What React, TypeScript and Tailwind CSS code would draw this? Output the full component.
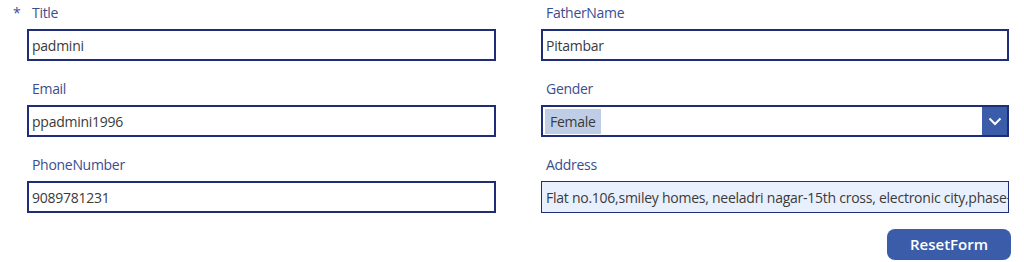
import React from "react";

const font = { fontFamily: '"Open Sans", "Noto Sans", sans-serif' };

function Label({ text, star }: { text: string; star?: boolean }) {
  return (
    <div className="relative h-[26px] leading-[26px] pl-[5px] mb-[3px] text-[14px] tracking-[-0.3px] text-[#3b4d8f]">
      {star && (
        <span className="absolute left-[-14px] top-0 text-[14px] text-[#3b4d8f]">*</span>
      )}
      {text}
    </div>
  );
}

function TextBox({ value }: { value: string }) {
  return (
    <div className="h-[32px] border-2 border-[#1f2d78] bg-white flex items-center px-[3px] text-[14px] tracking-[-0.25px] text-[#3a3a3a] overflow-hidden whitespace-nowrap">
      {value}
    </div>
  );
}

export default function App() {
  return (
    <div className="w-[1024px] h-[262px] bg-white overflow-hidden" style={font}>
      <div className="grid grid-cols-[469px_468px] gap-x-[45px] gap-y-[15px] pl-[27px]">
        <div>
          <Label text="Title" star />
          <TextBox value="padmini" />
        </div>
        <div>
          <Label text="FatherName" />
          <TextBox value="Pitambar" />
        </div>
        <div>
          <Label text="Email" />
          <TextBox value="ppadmini1996" />
        </div>
        <div>
          <Label text="Gender" />
          <div className="h-[32px] border-2 border-[#1f2d78] bg-white flex items-stretch">
            <div className="flex-1 flex items-center pl-[2px]">
              <span className="bg-[#bfcde6] px-[5px] h-[25px] leading-[25px] text-[14px] tracking-[-0.25px] text-[#3a3a3a]">
                Female
              </span>
            </div>
            <div className="w-[25px] bg-[#3b5ca8] flex items-center justify-center">
              <svg width="14" height="9" viewBox="0 0 14 9" fill="none">
                <path d="M1.5 1.5 L7 7 L12.5 1.5" stroke="white" strokeWidth="2" />
              </svg>
            </div>
          </div>
        </div>
        <div>
          <Label text="PhoneNumber" />
          <TextBox value="9089781231" />
        </div>
        <div>
          <Label text="Address" />
          <div className="h-[32px] border border-[#1f2d78] bg-[#e9f0fd] flex items-center pl-[4px] text-[14px] tracking-[-0.25px] text-[#3a3a3a] overflow-hidden whitespace-nowrap">
            Flat no.106,smiley homes, neeladri nagar-15th cross, electronic city,phase-1
          </div>
        </div>
      </div>
      <div className="flex justify-end pr-[13px] mt-[16px]">
        <button className="w-[124px] h-[31px] rounded-[8px] bg-[#3a5ca9] text-white text-[15px] font-semibold">
          ResetForm
        </button>
      </div>
    </div>
  );
}
